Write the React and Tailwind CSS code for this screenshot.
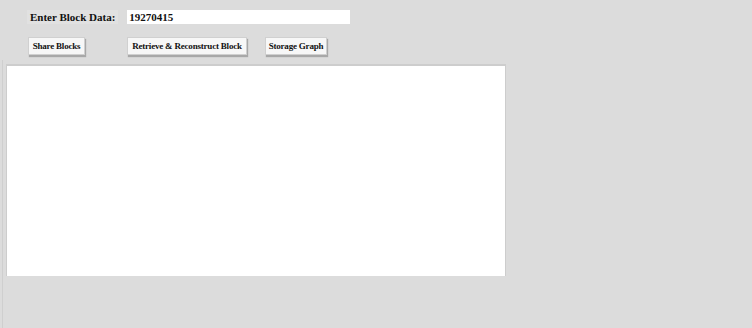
export default function App() {
  const font = { fontFamily: '"Liberation Serif", "Times New Roman", serif' };
  const btn =
    'h-[18px] px-0 bg-[#f7f7f7] border border-[#d0d0d0] shadow-[1px_2px_1px_#a8a8a8] text-[9px] tracking-[-0.2px] font-bold text-[#111] leading-none whitespace-nowrap';

  return (
    <div className="w-[752px] h-[328px] bg-[#dcdcdc] overflow-hidden relative" style={font}>
      <div className="absolute left-[2px] top-[60px] bottom-0 w-px bg-[#cfcfcf]" />
      <div className="flex items-center pt-[10px] pl-[27px] h-[24px]">
        <div className="h-[14px] px-[3px] flex items-center bg-[#e1e1e1] text-[11px] font-bold text-[#111]">
          Enter Block Data:
        </div>
        <div className="ml-[9px] w-[223px] h-[14px] bg-white flex items-center pl-[2px] text-[11px] font-bold text-[#111]">
          19270415
        </div>
      </div>
      <div className="flex items-start pl-[28px] mt-[13px] h-[20px]">
        <button className={`${btn} w-[57px]`}>Share Blocks</button>
        <button className={`${btn} w-[120px] ml-[42px]`}>Retrieve &amp; Reconstruct Block</button>
        <button className={`${btn} w-[62px] ml-[18px]`}>Storage Graph</button>
      </div>
      <div className="ml-[6px] mt-[7px] w-[500px] h-[212px] bg-white border-t-2 border-l border-r border-[#cdcdcd]" />
    </div>
  );
}
